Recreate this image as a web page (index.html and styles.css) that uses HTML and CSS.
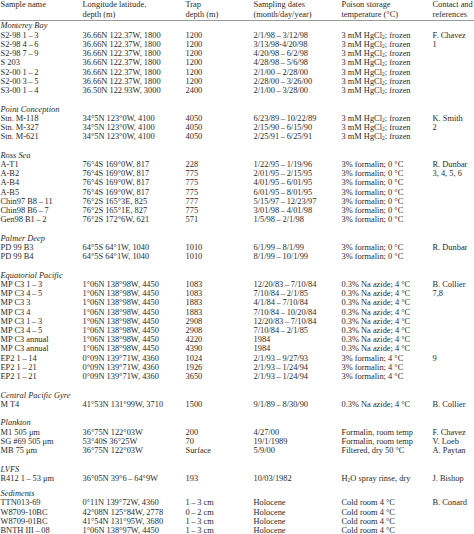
FILE: index.html
```html
<!DOCTYPE html>
<html>
<head>
<meta charset="utf-8">
<link rel="stylesheet" href="styles.css">
</head>
<body>
<table class="tbl">
<colgroup>
<col class="c1"><col class="c2"><col class="c3"><col class="c4"><col class="c5"><col class="c6">
</colgroup>
<thead>
<tr>
<th>Sample name</th>
<th>Longitude latitude,<br>depth (m)</th>
<th>Trap<br>depth (m)</th>
<th>Sampling dates<br>(month/day/year)</th>
<th>Poison storage<br>temperature (°C)</th>
<th>Contact and<br>references</th>
</tr>
</thead>
<tbody>
<tr class="sec"><td colspan="6">Monterey Bay</td></tr>
<tr><td>S2-98 1&#8201;–&#8201;3</td><td>36.66N 122.37W, 1800</td><td>1200</td><td>2/1/98&#8201;–&#8201;3/12/98</td><td>3 mM HgCl<sub>2</sub>; frozen</td><td>F. Chavez</td></tr>
<tr><td>S2-98 4&#8201;–&#8201;6</td><td>36.66N 122.37W, 1800</td><td>1200</td><td>3/13/98-4/20/98</td><td>3 mM HgCl<sub>2</sub>; frozen</td><td>1</td></tr>
<tr><td>S2-98 7&#8201;–&#8201;9</td><td>36.66N 122.37W, 1800</td><td>1200</td><td>4/20/98&#8201;–&#8201;6/2/98</td><td>3 mM HgCl<sub>2</sub>; frozen</td><td></td></tr>
<tr><td>S 203</td><td>36.66N 122.37W, 1800</td><td>1200</td><td>4/28/98&#8201;–&#8201;5/6/98</td><td>3 mM HgCl<sub>2</sub>; frozen</td><td></td></tr>
<tr><td>S2-00 1&#8201;–&#8201;2</td><td>36.66N 122.37W, 1800</td><td>1200</td><td>2/1/00&#8201;–&#8201;2/28/00</td><td>3 mM HgCl<sub>2</sub>; frozen</td><td></td></tr>
<tr><td>S2-00 3&#8201;–&#8201;5</td><td>36.66N 122.37W, 1800</td><td>1200</td><td>2/28/00&#8201;–&#8201;3/26/00</td><td>3 mM HgCl<sub>2</sub>; frozen</td><td></td></tr>
<tr><td>S3-00 1&#8201;–&#8201;4</td><td>36.50N 122.93W, 3000</td><td>2400</td><td>2/1/00&#8201;–&#8201;3/28/00</td><td>3 mM HgCl<sub>2</sub>; frozen</td><td></td></tr>
<tr class="gap"><td colspan="6"></td></tr>
<tr class="sec"><td colspan="6">Point Conception</td></tr>
<tr><td>Stn. M-118</td><td>34°5N 123°0W, 4100</td><td>4050</td><td>6/23/89&#8201;–&#8201;10/22/89</td><td>3 mM HgCl<sub>2</sub>; frozen</td><td>K. Smith</td></tr>
<tr><td>Stn. M-327</td><td>34°5N 123°0W, 4100</td><td>4050</td><td>2/15/90&#8201;–&#8201;6/15/90</td><td>3 mM HgCl<sub>2</sub>; frozen</td><td>2</td></tr>
<tr><td>Stn. M-621</td><td>34°5N 123°0W, 4100</td><td>4050</td><td>2/25/91&#8201;–&#8201;6/25/91</td><td>3 mM HgCl<sub>2</sub>; frozen</td><td></td></tr>
<tr class="gap"><td colspan="6"></td></tr>
<tr class="sec"><td colspan="6">Ross Sea</td></tr>
<tr><td>A-T1</td><td>76°4S 169°0W, 817</td><td>228</td><td>1/22/95&#8201;–&#8201;1/19/96</td><td>3% formalin; 0 °C</td><td>R. Dunbar</td></tr>
<tr><td>A-B2</td><td>76°4S 169°0W, 817</td><td>775</td><td>2/01/95&#8201;–&#8201;2/15/95</td><td>3% formalin; 0 °C</td><td>3, 4, 5, 6</td></tr>
<tr><td>A-B4</td><td>76°4S 169°0W, 817</td><td>775</td><td>4/01/95&#8201;–&#8201;6/01/95</td><td>3% formalin; 0 °C</td><td></td></tr>
<tr><td>A-B5</td><td>76°4S 169°0W, 817</td><td>775</td><td>6/01/95&#8201;–&#8201;8/01/95</td><td>3% formalin; 0 °C</td><td></td></tr>
<tr><td>Chin97 B8&#8201;–&#8201;11</td><td>76°2S 165°3E, 825</td><td>777</td><td>5/15/97&#8201;–&#8201;12/23/97</td><td>3% formalin; 0 °C</td><td></td></tr>
<tr><td>Chin98 B6&#8201;–&#8201;7</td><td>76°2S 165°1E, 827</td><td>775</td><td>3/01/98&#8201;–&#8201;4/01/98</td><td>3% formalin; 0 °C</td><td></td></tr>
<tr><td>Gen98 B1&#8201;–&#8201;2</td><td>76°2S 172°6W, 621</td><td>571</td><td>1/5/98&#8201;–&#8201;2/1/98</td><td>3% formalin; 0 °C</td><td></td></tr>
<tr class="gap"><td colspan="6"></td></tr>
<tr class="sec"><td colspan="6">Palmer Deep</td></tr>
<tr><td>PD 99 B3</td><td>64°5S 64°1W, 1040</td><td>1010</td><td>6/1/99&#8201;–&#8201;8/1/99</td><td>3% formalin; 0 °C</td><td>R. Dunbar</td></tr>
<tr><td>PD 99 B4</td><td>64°5S 64°1W, 1040</td><td>1010</td><td>8/1/99&#8201;–&#8201;10/1/99</td><td>3% formalin; 0 °C</td><td></td></tr>
<tr class="gap"><td colspan="6"></td></tr>
<tr class="sec"><td colspan="6">Equatorial Pacific</td></tr>
<tr><td>MP C3 1&#8201;–&#8201;3</td><td>1°06N 138°98W, 4450</td><td>1083</td><td>12/20/83&#8201;–&#8201;7/10/84</td><td>0.3% Na azide; 4 °C</td><td>B. Collier</td></tr>
<tr><td>MP C3 4&#8201;–&#8201;5</td><td>1°06N 138°98W, 4450</td><td>1083</td><td>7/10/84&#8201;–&#8201;2/1/85</td><td>0.3% Na azide; 4 °C</td><td>7,8</td></tr>
<tr><td>MP C3 3</td><td>1°06N 138°98W, 4450</td><td>1883</td><td>4/1/84&#8201;–&#8201;7/10/84</td><td>0.3% Na azide; 4 °C</td><td></td></tr>
<tr><td>MP C3 4</td><td>1°06N 138°98W, 4450</td><td>1883</td><td>7/10/84&#8201;–&#8201;10/20/84</td><td>0.3% Na azide; 4 °C</td><td></td></tr>
<tr><td>MP C3 1&#8201;–&#8201;3</td><td>1°06N 138°98W, 4450</td><td>2908</td><td>12/20/83&#8201;–&#8201;7/10/84</td><td>0.3% Na azide; 4 °C</td><td></td></tr>
<tr><td>MP C3 4&#8201;–&#8201;5</td><td>1°06N 138°98W, 4450</td><td>2908</td><td>7/10/84&#8201;–&#8201;2/1/85</td><td>0.3% Na azide; 4 °C</td><td></td></tr>
<tr><td>MP C3 annual</td><td>1°06N 138°98W, 4450</td><td>4220</td><td>1984</td><td>0.3% Na azide; 4 °C</td><td></td></tr>
<tr><td>MP C3 annual</td><td>1°06N 138°98W, 4450</td><td>4390</td><td>1984</td><td>0.3% Na azide; 4 °C</td><td></td></tr>
<tr><td>EP2 1&#8201;–&#8201;14</td><td>0°09N 139°71W, 4360</td><td>1024</td><td>2/1/93&#8201;–&#8201;9/27/93</td><td>3% formalin; 4 °C</td><td>9</td></tr>
<tr><td>EP2 1&#8201;–&#8201;21</td><td>0°09N 139°71W, 4360</td><td>1926</td><td>2/1/93&#8201;–&#8201;1/24/94</td><td>3% formalin; 4 °C</td><td></td></tr>
<tr><td>EP2 1&#8201;–&#8201;21</td><td>0°09N 139°71W, 4360</td><td>3650</td><td>2/1/93&#8201;–&#8201;1/24/94</td><td>3% formalin; 4 °C</td><td></td></tr>
<tr class="gap"><td colspan="6"></td></tr>
<tr class="sec"><td colspan="6">Central Pacific Gyre</td></tr>
<tr><td>M T4</td><td>41°53N 131°99W, 3710</td><td>1500</td><td>9/1/89&#8201;–&#8201;8/30/90</td><td>0.3% Na azide; 4 °C</td><td>B. Collier</td></tr>
<tr class="gap"><td colspan="6"></td></tr>
<tr class="sec"><td colspan="6">Plankton</td></tr>
<tr><td>M1 505 μm</td><td>36°75N 122°03W</td><td>200</td><td>4/27/00</td><td>Formalin, room temp</td><td>F. Chavez</td></tr>
<tr><td>SG #69 505 μm</td><td>53°40S 36°25W</td><td>70</td><td>19/1/1989</td><td>Formalin, room temp</td><td>V. Loeb</td></tr>
<tr><td>MB 75 μm</td><td>36°75N 122°03W</td><td>Surface</td><td>5/9/00</td><td>Filtered, dry 50 °C</td><td>A. Paytan</td></tr>
<tr class="gap"><td colspan="6"></td></tr>
<tr class="sec"><td colspan="6">LVFS</td></tr>
<tr><td>R412 1&#8201;–&#8201;53 μm</td><td>36°05N 39°6&#8201;–&#8201;64°9W</td><td>193</td><td>10/03/1982</td><td>H<sub>2</sub>O spray rinse, dry</td><td>J. Bishop</td></tr>
<tr class="gap-s"><td colspan="6"></td></tr>
<tr class="sec"><td colspan="6">Sediments</td></tr>
<tr><td>TTN013-69</td><td>0°11N 139°72W, 4360</td><td>1&#8201;–&#8201;3 cm</td><td>Holocene</td><td>Cold room 4 °C</td><td>B. Conard</td></tr>
<tr><td>W8709-10BC</td><td>42°08N 125°84W, 2778</td><td>0&#8201;–&#8201;2 cm</td><td>Holocene</td><td>Cold room 4 °C</td><td></td></tr>
<tr><td>W8709-01BC</td><td>41°54N 131°95W, 3680</td><td>1&#8201;–&#8201;3 cm</td><td>Holocene</td><td>Cold room 4 °C</td><td></td></tr>
<tr><td>BNTH III&#8201;–&#8201;08</td><td>1°06N 138°97W, 4450</td><td>1&#8201;–&#8201;3 cm</td><td>Holocene</td><td>Cold room 4 °C</td><td></td></tr>
</tbody>
</table>
</body>
</html>
```

FILE: styles.css
```css
html, body {
  margin: 0;
  padding: 0;
  background: #ffffff;
  overflow: hidden;
}

body {
  width: 474px;
  height: 534px;
  font-family: "Liberation Serif", "Times New Roman", serif;
  font-size: 8.4px;
  color: #2b2b2b;
}

.tbl {
  width: 474px;
  table-layout: fixed;
  border-collapse: collapse;
  border-spacing: 0;
}

.c1 { width: 82px; }
.c2 { width: 103px; }
.c3 { width: 68px; }
.c4 { width: 88px; }
.c5 { width: 91px; }
.c6 { width: 42px; }

.tbl th {
  font-weight: normal;
  text-align: left;
  vertical-align: top;
  white-space: nowrap;
  line-height: 9.6px;
  padding: 0 0 1.3px 0.5px;
  border-bottom: 1px solid #9a9a9a;
}

.tbl td {
  white-space: nowrap;
  line-height: 9.2px;
  height: 9.2px;
  padding: 0 0 0 0.5px;
  vertical-align: top;
}

.tbl sub {
  font-size: 5.5px;
  line-height: 0;
  vertical-align: -1px;
}

.sec td {
  font-style: italic;
}

.gap td {
  height: 9.4px;
  line-height: 0;
}

.gap-s td {
  height: 6.2px;
  line-height: 0;
}
```
